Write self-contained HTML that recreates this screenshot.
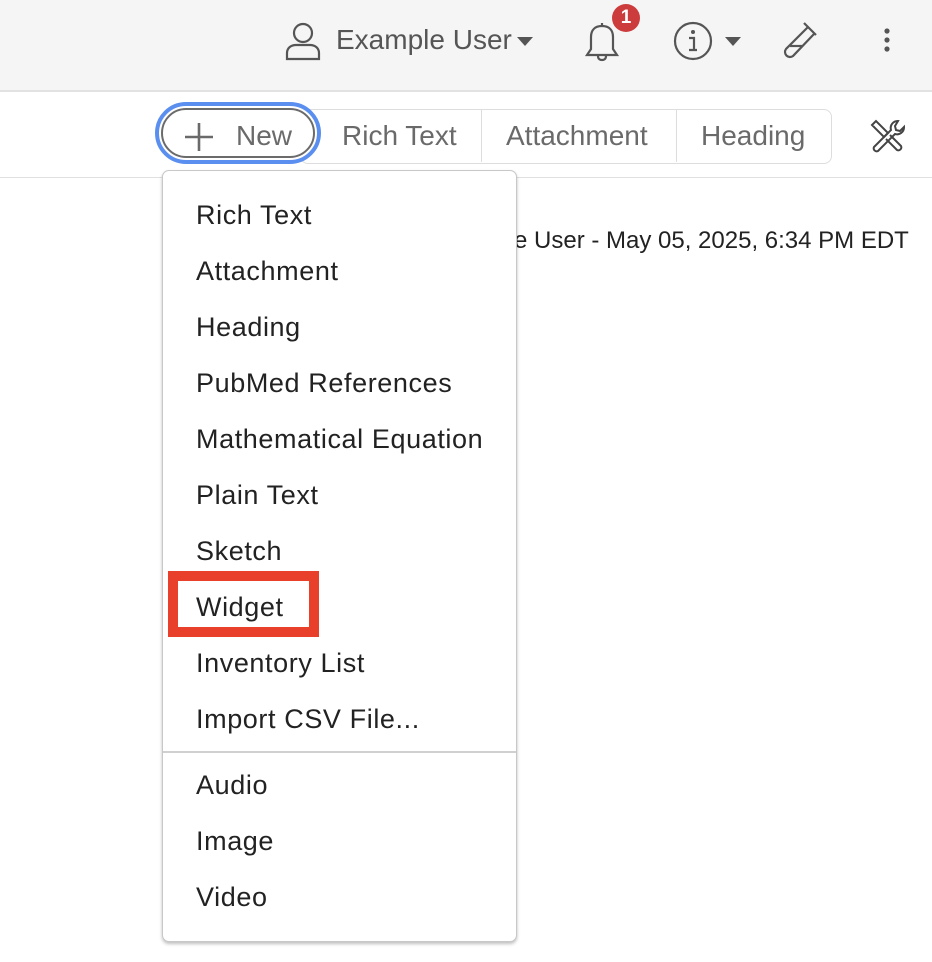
<!DOCTYPE html>
<html><head><meta charset="utf-8"><style>
body{margin:0;width:932px;height:962px;background:#fff;font-family:"Liberation Sans",sans-serif;position:relative;overflow:hidden}
.hdr{position:absolute;left:0;top:0;width:932px;height:90px;background:#f5f5f5;border-bottom:2px solid #e2e2e2}
.t{position:absolute;white-space:nowrap}
.tb{position:absolute;left:0;top:177px;width:932px;height:1px;background:#e0e0e0}
.grp{position:absolute;left:300px;top:109px;width:530px;height:53px;border:1px solid #ddd;border-radius:8px;background:#fff}
.new{position:absolute;left:155px;top:102px;width:166px;height:62px;border:4px solid #5b8fef;border-radius:34px;background:#fff;box-sizing:border-box}
.new:after{content:"";position:absolute;left:2px;top:2px;right:2px;bottom:2px;border:2px solid #6b6b6b;border-radius:30px}
.menu{position:absolute;left:162px;top:170px;width:353px;height:770px;border:1px solid #c8c8c8;border-radius:7px;background:#fff;box-shadow:0 2px 3px rgba(0,0,0,.25)}
.mi{position:absolute;left:33px;font-size:27px;letter-spacing:0.6px;color:#222;line-height:30px}
</style></head><body>
<div class="hdr"></div>
<svg class="t" style="left:283px;top:20px" width="40" height="42" viewBox="0 0 40 42" fill="none" stroke="#555" stroke-width="2.2"><circle cx="20" cy="13" r="9"/><path d="M4 39v-6c0-5 4-8 9-8h14c5 0 9 3 9 8v6z"/></svg>
<div class="t" style="left:336px;top:24px;font-size:28px;color:#555">Example User</div>
<svg class="t" style="left:516px;top:35px" width="18" height="12"><path d="M1 2h16l-8 9z" fill="#555"/></svg>
<svg class="t" style="left:582px;top:18px" width="42" height="44" fill="none" stroke="#555" stroke-width="2.2"><path d="M5 37h30l-4-6V19c0-7-4-11-11-11S9 12 9 19v12z"/><path d="M16 38c0 3 2 4 4 4s4-1 4-4"/><path d="M20 8V5"/></svg>
<div class="t" style="left:612px;top:4px;width:28px;height:28px;border-radius:14px;background:#cc3c3c;color:#fff;font-size:19px;text-align:center;line-height:28px;font-weight:bold">1</div>
<svg class="t" style="left:672px;top:20px" width="42" height="42" fill="none" stroke="#555" stroke-width="2.2"><circle cx="21" cy="21" r="18"/><circle cx="21" cy="12" r="2" fill="#555" stroke="none"/><path d="M17 18h5v12M17 30h8"/></svg>
<svg class="t" style="left:724px;top:35px" width="18" height="12"><path d="M1 2h16l-8 9z" fill="#555"/></svg>
<svg class="t" style="left:776px;top:20px" width="44" height="42" fill="none" stroke="#555" stroke-width="2.2"><path d="M28 3l12 12M32 7L10 29a5 5 0 0 0 7 7L38 14"/><path d="M14 26h12"/></svg>
<svg class="t" style="left:882px;top:27px" width="10" height="28"><circle cx="5" cy="4" r="2.6" fill="#555"/><circle cx="5" cy="13" r="2.6" fill="#555"/><circle cx="5" cy="22" r="2.6" fill="#555"/></svg>
<div class="tb"></div>
<div class="grp"></div>
<div class="t" style="left:481px;top:110px;width:1px;height:52px;background:#ddd"></div>
<div class="t" style="left:676px;top:110px;width:1px;height:52px;background:#ddd"></div>
<div class="t" style="left:342px;top:120px;font-size:28px;color:#6a6a6a">Rich Text</div>
<div class="t" style="left:506px;top:120px;font-size:28px;color:#6a6a6a">Attachment</div>
<div class="t" style="left:701px;top:120px;font-size:28px;color:#6a6a6a">Heading</div>
<div class="new"></div>
<svg class="t" style="left:184px;top:122px" width="30" height="30" stroke="#6a6a6a" stroke-width="2.6"><path d="M15 1v28M1 15h28"/></svg>
<div class="t" style="left:236px;top:120px;font-size:28px;color:#6a6a6a">New</div>
<svg class="t" style="left:868px;top:117px" width="40" height="40" fill="none" stroke="#444" stroke-width="2"><path d="M4 8l4-4 12 12-4 4zM18 22l11 11a3 3 0 0 0 4-4L22 18"/><path d="M30 4a7 7 0 0 0-7 9L6 30a3 3 0 0 0 4 4l17-17a7 7 0 0 0 9-7l-4 4-4-1-1-4z"/></svg>
<div class="t" style="left:514px;top:227px;font-size:24px;color:#222">e User - May 05, 2025, 6:34 PM EDT</div>
<div class="menu">
<div class="mi" style="top:29px">Rich Text</div>
<div class="mi" style="top:85px">Attachment</div>
<div class="mi" style="top:141px">Heading</div>
<div class="mi" style="top:197px">PubMed References</div>
<div class="mi" style="top:253px">Mathematical Equation</div>
<div class="mi" style="top:309px">Plain Text</div>
<div class="mi" style="top:365px">Sketch</div>
<div class="mi" style="top:421px">Widget</div>
<div class="mi" style="top:477px">Inventory List</div>
<div class="mi" style="top:533px">Import CSV File...</div>
<div style="position:absolute;left:0;top:580px;width:353px;height:2px;background:#d0d0d0"></div>
<div class="mi" style="top:599px">Audio</div>
<div class="mi" style="top:655px">Image</div>
<div class="mi" style="top:711px">Video</div>
</div>
<div class="t" style="left:168px;top:571px;width:151px;height:66px;border:10px solid #e8402a;box-sizing:border-box"></div>
</body></html>
